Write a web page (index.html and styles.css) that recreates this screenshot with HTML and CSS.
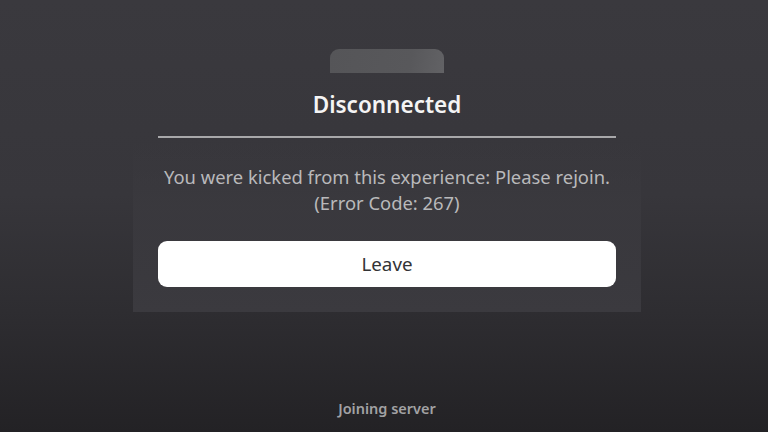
FILE: index.html
```html
<!DOCTYPE html>
<html>
<head>
<meta charset="utf-8">
<link rel="stylesheet" href="styles.css">
</head>
<body>
<div class="stage">
  <div class="panel">
    <div class="tab"></div>
    <h1 class="title">Disconnected</h1>
    <div class="divider"></div>
    <p class="message">You were kicked from this experience: Please rejoin.<br>(Error Code: 267)</p>
    <button class="leave">Leave</button>
  </div>
  <div class="status">Joining server</div>
</div>
</body>
</html>
```
FILE: styles.css
```css
html, body {
  margin: 0;
  padding: 0;
}
body {
  width: 768px;
  height: 432px;
  overflow: hidden;
  background: linear-gradient(to bottom, #3a393e 0%, #37363b 45%, #2e2d31 72%, #232225 100%);
  font-family: "Noto Sans", "Open Sans", sans-serif;
}
.stage {
  height: 432px;
  display: flex;
  flex-direction: column;
  align-items: center;
  padding-left: 6px;
  box-sizing: border-box;
}
.panel {
  width: 508px;
  padding: 49px 0 25px;
  display: flex;
  flex-direction: column;
  align-items: center;
  background: linear-gradient(to bottom, rgba(58,57,62,0) 0%, rgba(58,57,62,0) 45%, rgba(59,58,63,0.7) 65%, #3b3a3f 100%);
}
.tab {
  width: 114px;
  height: 24px;
  border-radius: 9px 9px 0 0;
  background: linear-gradient(100deg, #555558 0%, #58585b 70%, #626265 100%);
}
.title {
  margin: 18px 0 0;
  font-size: 22.5px;
  line-height: 28px;
  font-weight: 600;
  color: #f4f4f4;
}
.divider {
  margin-top: 17px;
  width: 458px;
  height: 2px;
  background: #a8a8aa;
}
.message {
  margin: 26px 0 0;
  text-align: center;
  font-size: 18.4px;
  line-height: 26px;
  color: #b9b9bb;
}
.leave {
  margin-top: 25px;
  width: 458px;
  height: 46px;
  border: none;
  border-radius: 9px;
  background: #ffffff;
  color: #333335;
  font-family: "Noto Sans", "Open Sans", sans-serif;
  font-size: 18.8px;
}
.status {
  margin-top: auto;
  margin-bottom: 14px;
  font-size: 14.5px;
  font-weight: 600;
  color: #a2a2a4;
}
```
